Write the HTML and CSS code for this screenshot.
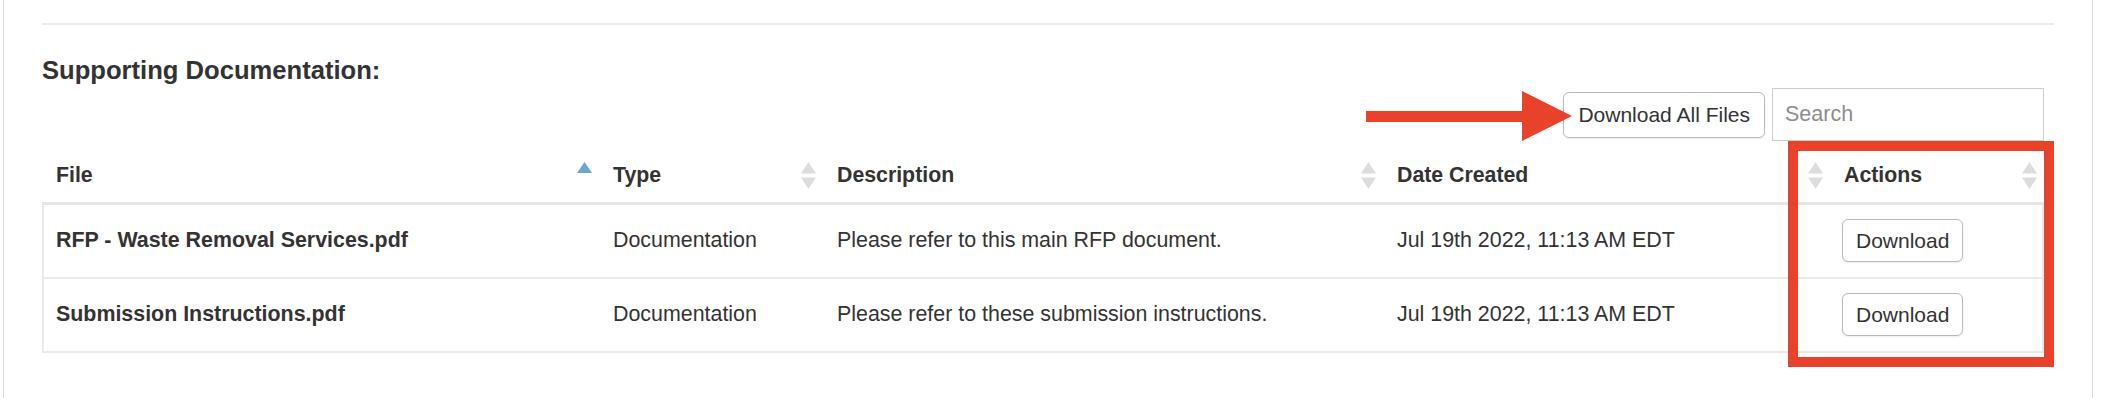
FILE: index.html
```html
<!DOCTYPE html>
<html>
<head>
<meta charset="utf-8">
<link rel="stylesheet" href="styles.css">
</head>
<body>
<div class="panel">
  <div class="rule"></div>
  <div class="section">
    <h4 class="title">Supporting Documentation:</h4>
    <div class="toolbar">
      <svg class="arrow" width="206" height="50" viewBox="0 0 206 50">
        <rect x="0" y="20" width="158" height="11" fill="#e8422b"/>
        <polygon points="156,0 206,25 156,50" fill="#e8422b"/>
      </svg>
      <button class="btn btn-all">Download All Files</button>
      <input class="search" type="text" placeholder="Search">
    </div>
    <div class="table-wrap">
      <table class="docs">
        <colgroup>
          <col class="c-file"><col class="c-type"><col class="c-desc"><col class="c-date"><col class="c-act">
        </colgroup>
        <thead>
          <tr>
            <th><div class="th-in"><span>File</span>
              <svg class="sort" width="15" height="27" viewBox="0 0 15 27"><polygon points="7.5,0 15,11 0,11" fill="#6aa6d0"/></svg></div></th>
            <th><div class="th-in"><span>Type</span>
              <svg class="sort" width="15" height="27" viewBox="0 0 15 27"><polygon points="7.5,0 15,11.5 0,11.5" fill="#dcdcdc"/><polygon points="0,15.5 15,15.5 7.5,27" fill="#dcdcdc"/></svg></div></th>
            <th><div class="th-in"><span>Description</span>
              <svg class="sort" width="15" height="27" viewBox="0 0 15 27"><polygon points="7.5,0 15,11.5 0,11.5" fill="#dcdcdc"/><polygon points="0,15.5 15,15.5 7.5,27" fill="#dcdcdc"/></svg></div></th>
            <th><div class="th-in"><span>Date Created</span>
              <svg class="sort" width="15" height="27" viewBox="0 0 15 27"><polygon points="7.5,0 15,11.5 0,11.5" fill="#dcdcdc"/><polygon points="0,15.5 15,15.5 7.5,27" fill="#dcdcdc"/></svg></div></th>
            <th><div class="th-in"><span>Actions</span>
              <svg class="sort" width="15" height="27" viewBox="0 0 15 27"><polygon points="7.5,0 15,11.5 0,11.5" fill="#dcdcdc"/><polygon points="0,15.5 15,15.5 7.5,27" fill="#dcdcdc"/></svg></div></th>
          </tr>
        </thead>
        <tbody>
          <tr>
            <td class="name">RFP - Waste Removal Services.pdf</td>
            <td>Documentation</td>
            <td>Please refer to this main RFP document.</td>
            <td>Jul 19th 2022, 11:13 AM EDT</td>
            <td class="act"><button class="btn btn-dl">Download</button></td>
          </tr>
          <tr>
            <td class="name">Submission Instructions.pdf</td>
            <td>Documentation</td>
            <td>Please refer to these submission instructions.</td>
            <td>Jul 19th 2022, 11:13 AM EDT</td>
            <td class="act"><button class="btn btn-dl">Download</button></td>
          </tr>
        </tbody>
      </table>
      <div class="highlight"></div>
    </div>
  </div>
</div>
</body>
</html>
```

FILE: styles.css
```css
* { box-sizing: border-box; }
html, body { margin: 0; padding: 0; background: #fff; }
body {
  font-family: "Liberation Sans", Arial, Helvetica, sans-serif;
  color: #333;
  font-size: 21px;
}
.panel {
  margin-left: 3px;
  width: 2090px;
  min-height: 398px;
  border-left: 1px solid #dcdcdc;
  border-right: 1px solid #dcdcdc;
  padding: 23px 38px 0 38px;
}
.rule {
  height: 0;
  border-top: 2px solid #ebebeb;
}
.section {
  padding-right: 10px;
}
.title {
  margin: 30px 0 3px 0;
  font-size: 25.6px;
  line-height: 30px;
  font-weight: bold;
  color: #333;
}
.toolbar {
  position: relative;
  display: flex;
  justify-content: flex-end;
  align-items: center;
  gap: 7px;
  height: 53px;
}
.arrow {
  position: absolute;
  left: 1324px;
  top: 3px;
}
.btn {
  font-family: "Liberation Sans", Arial, Helvetica, sans-serif;
  font-size: 21px;
  color: #333;
  background: #fff;
  border: 1px solid #b9b9b9;
  border-radius: 6px;
  box-shadow: 0 1px 2px rgba(0,0,0,0.08);
  line-height: 1;
  cursor: pointer;
}
.btn-all {
  height: 46px;
  padding: 0 14px;
}
.btn-dl {
  display: block;
  height: 43px;
  padding: 0 13px;
}
.search {
  width: 272px;
  height: 53px;
  border: 1px solid #cccccc;
  border-radius: 0;
  padding: 0 12px;
  font-family: "Liberation Sans", Arial, Helvetica, sans-serif;
  font-size: 21.5px;
  color: #333;
  outline: none;
}
.search::placeholder { color: #8e8e8e; }
.table-wrap {
  position: relative;
  margin-top: 8px;
}
.docs {
  width: 2002px;
  table-layout: fixed;
  border-collapse: separate;
  border-spacing: 0;
}
.c-file { width: 557px; }
.c-type { width: 224px; }
.c-desc { width: 560px; }
.c-date { width: 447px; }
.c-act { width: 214px; }
.docs th {
  text-align: left;
  font-weight: bold;
  font-size: 21.3px;
  line-height: 29px;
  padding: 12px 7px 12px 14px;
  border-bottom: 3px solid #e6e6e6;
}
.th-in {
  display: flex;
  justify-content: space-between;
  align-items: center;
}
.sort { display: block; flex: none; }
.docs td {
  font-size: 21.4px;
  line-height: 29px;
  padding: 14px 14px 15px 14px;
  border-bottom: 2px solid #e9e9e9;
  vertical-align: middle;
  white-space: nowrap;
}
.docs td.name {
  font-weight: bold;
  border-left: 2px solid #e9e9e9;
  padding-left: 12px;
}
.docs td.act {
  border-right: 2px solid #e9e9e9;
  padding-left: 12px;
}
.highlight {
  position: absolute;
  left: 1746px;
  top: -8px;
  width: 266px;
  height: 226px;
  border: 10px solid #e8422b;
  pointer-events: none;
}
```
